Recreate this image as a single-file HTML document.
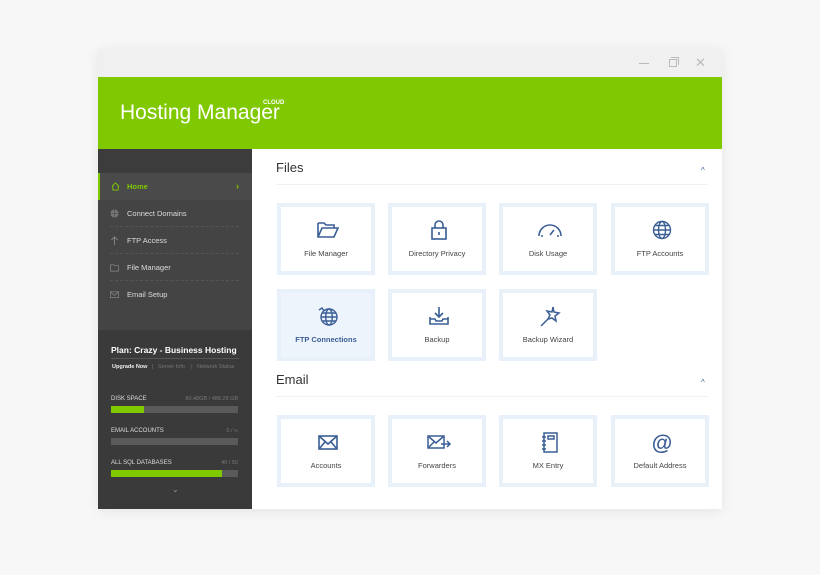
<!DOCTYPE html>
<html><head><style>
*{margin:0;padding:0;box-sizing:border-box}
body{width:820px;height:575px;background:#f7f7f7;font-family:"Liberation Sans",sans-serif;position:relative;overflow:hidden}
.win{position:absolute;left:98px;top:49px;width:624px;height:460px;background:#fff;box-shadow:0 2px 12px rgba(0,0,0,.08)}
.tb{position:absolute;left:0;top:0;width:624px;height:28px;background:#f0f0f0}
.hd{position:absolute;left:0;top:28px;width:624px;height:72px;background:#80c800}
.hd .t{position:absolute;left:22px;top:24px;color:#fff;font-size:21px}
.hd .c{position:absolute;left:165px;top:23px;color:#fff;font-size:6px;font-weight:bold}
.sb{position:absolute;left:0;top:100px;width:154px;height:360px;background:#444}
.sbt{position:absolute;left:0;top:0;width:154px;height:24px;background:#3c3c3c}
.mi{position:absolute;left:0;width:154px;height:27px;color:#ddd;font-size:7.5px;line-height:27px;padding-left:29px}
.mi .ic{position:absolute;left:12px;top:9px;width:9px;height:9px;color:#888}
.mi.sep:after{content:"";position:absolute;left:12px;right:13px;bottom:0;border-bottom:1px dashed #555}
.home{background:#4a4a4a;border-left:2px solid #80c800;color:#80c800;font-weight:bold;padding-left:27px}
.plan{position:absolute;left:0;top:181px;width:154px;height:179px;background:#3a3a3a}
.lbl{position:absolute;left:13px;font-size:6px;color:#ddd}
.val{position:absolute;right:14px;font-size:5.5px;color:#777}
.bar{position:absolute;left:13px;width:127px;height:7px;background:#5a5a5a}
.bar i{display:block;height:7px;background:#80c800}
.sec{position:absolute;left:178px;font-size:13px;color:#333}
.line{position:absolute;left:178px;width:432px;border-top:1px solid #eef0f3}
.car{position:absolute;left:603px;font-size:8px;color:#3a5e95}
.tile{position:absolute;width:98px;height:72px;border:4px solid #e8f0fa;background:#fff;text-align:center;font-size:7.5px;color:#444}
.tile svg{position:absolute;left:36px;top:13px}
.tile span{position:absolute;left:0;right:0;top:42px}
.act{background:#eef4fc;color:#3a5e95;font-weight:bold}
</style></head><body>
<div class="win">
<div class="tb">
<div style="position:absolute;left:541px;top:14px;width:10px;border-top:1px solid #bbb"></div>
<div style="position:absolute;left:571px;top:10px;width:8px;height:8px;border:1px solid #bbb"></div>
<div style="position:absolute;left:573px;top:8px;width:8px;height:8px;border-top:1px solid #bbb;border-right:1px solid #bbb"></div>
<div style="position:absolute;left:597px;top:6px;font-size:13px;color:#bbb">✕</div>
</div>
<div class="hd"><div class="t">Hosting Manager</div><div class="c">CLOUD</div></div>
<div class="sb">
<div class="sbt"></div>
<div class="mi home" style="top:24px"><svg class="ic" style="left:11px" viewBox="0 0 10 10"><path d="M1 5L5 1L9 5M2 4V9H8V4" fill="none" stroke="#80c800"/></svg>Home<span style="position:absolute;right:13px;font-size:9px">›</span></div>
<div class="mi sep" style="top:51px"><svg class="ic" viewBox="0 0 10 10"><circle cx="5" cy="5" r="4.5" fill="#777"/><path d="M0.5 5H9.5M5 .5V9.5" stroke="#444" stroke-width=".6"/></svg>Connect Domains</div>
<div class="mi sep" style="top:78px"><svg class="ic" viewBox="0 0 10 10"><path d="M5 10V1M1.5 4.5L5 1L8.5 4.5" fill="none" stroke="#888"/></svg>FTP Access</div>
<div class="mi sep" style="top:105px"><svg class="ic" viewBox="0 0 10 10"><path d="M.5 2H4L5 3H9.5V9H.5Z" fill="none" stroke="#888" stroke-width=".8"/></svg>File Manager</div>
<div class="mi" style="top:132px"><svg class="ic" viewBox="0 0 10 10"><rect x=".5" y="2" width="9" height="6.5" fill="none" stroke="#888" stroke-width=".8"/><path d="M.5 2L5 6L9.5 2" fill="none" stroke="#888" stroke-width=".8"/></svg>Email Setup</div>
<div class="plan">
<div style="position:absolute;left:13px;top:15px;font-size:8.5px;font-weight:bold;color:#fff">Plan: Crazy - Business Hosting</div>
<div style="position:absolute;left:13px;right:13px;top:28px;border-top:1px solid #555"></div>
<div style="position:absolute;left:14px;top:34px;font-size:5.5px;color:#eee;font-weight:bold">Upgrade Now <span style="color:#777;font-weight:normal">&nbsp; | &nbsp;&nbsp;Server Info &nbsp;&nbsp; | &nbsp;&nbsp;Network Status</span></div>
<div class="lbl" style="top:66px">DISK SPACE</div><div class="val" style="top:66px">80.48GB / 488.28 GB</div>
<div class="bar" style="top:76px"><i style="width:33px"></i></div>
<div class="lbl" style="top:98px">EMAIL ACCOUNTS</div><div class="val" style="top:98px">0 / ∞</div>
<div class="bar" style="top:108px"></div>
<div class="lbl" style="top:130px">ALL SQL DATABASES</div><div class="val" style="top:130px">40 / 50</div>
<div class="bar" style="top:140px"><i style="width:111px"></i></div>
<div style="position:absolute;left:74px;top:155px;font-size:8px;color:#999">⌄</div>
</div>
</div>
<div class="sec" style="top:111px">Files</div><div class="car" style="top:117px">^</div>
<div class="line" style="top:135px"></div>
<div class="sec" style="top:323px">Email</div><div class="car" style="top:329px">^</div>
<div class="line" style="top:347px"></div>
</div>
<div class="tile" style="left:277px;top:203px"><svg width="22" height="20" viewBox="0 0 22 20" fill="none" stroke="#3a5e95" stroke-width="1.6"><path d="M1 3H7L9 5H17V8M1 3V17H17L21 8H5L1 17"/></svg><span>File Manager</span></div>
<div class="tile" style="left:388px;top:203px"><svg width="22" height="20" viewBox="0 0 22 20" fill="none" stroke="#3a5e95" stroke-width="1.6"><rect x="4" y="8" width="14" height="11"/><path d="M7 8V5a4 4 0 0 1 8 0V8M11 12V15"/></svg><span>Directory Privacy</span></div>
<div class="tile" style="left:499px;top:203px"><svg width="26" height="20" viewBox="0 0 26 20" fill="none" stroke="#3a5e95" stroke-width="1.6" style="left:34px"><path d="M2 16A11 11 0 0 1 24 16M4 16H6M20 16H22M13 15L17 10"/></svg><span>Disk Usage</span></div>
<div class="tile" style="left:611px;top:203px"><svg width="22" height="20" viewBox="0 0 22 20" fill="none" stroke="#3a5e95" stroke-width="1.4"><circle cx="11" cy="10" r="8.5"/><ellipse cx="11" cy="10" rx="3.5" ry="8.5"/><path d="M2.5 10H19.5M4 5.5H18M4 14.5H18"/></svg><span>FTP Accounts</span></div>
<div class="tile act" style="left:277px;top:289px"><svg width="22" height="20" viewBox="0 0 22 20" fill="none" stroke="#3a5e95" stroke-width="1.4"><circle cx="12" cy="11" r="8"/><ellipse cx="12" cy="11" rx="3.3" ry="8"/><path d="M4 11H20M5.5 7H18.5M5.5 15H18.5M2 4L5 2L7 5"/></svg><span>FTP Connections</span></div>
<div class="tile" style="left:388px;top:289px"><svg width="22" height="20" viewBox="0 0 22 20" fill="none" stroke="#3a5e95" stroke-width="1.6"><path d="M11 1V11M7 7L11 11L15 7M2 11V18H20V11M2 13H7L8 15H14L15 13H20"/></svg><span>Backup</span></div>
<div class="tile" style="left:499px;top:289px"><svg width="22" height="22" viewBox="0 0 22 22" fill="none" stroke="#3a5e95" stroke-width="1.5"><path d="M14 1L15 6L20 7L16 10L17 15L13 12L9 13L11 9L8 5L13 6Z"/><path d="M10 12L2 20"/></svg><span>Backup Wizard</span></div>
<div class="tile" style="left:277px;top:415px"><svg width="22" height="20" viewBox="0 0 22 20" fill="none" stroke="#3a5e95" stroke-width="1.6"><rect x="2" y="4" width="18" height="13"/><path d="M2 4L11 12L20 4M2 17L8 10M20 17L14 10"/></svg><span>Accounts</span></div>
<div class="tile" style="left:388px;top:415px"><svg width="26" height="20" viewBox="0 0 26 20" fill="none" stroke="#3a5e95" stroke-width="1.5" style="left:34px"><rect x="2" y="4" width="16" height="12"/><path d="M2 4L10 11L18 4M2 16L8 10M15 12H24M21 9L24 12L21 15"/></svg><span>Forwarders</span></div>
<div class="tile" style="left:499px;top:415px"><svg width="22" height="22" viewBox="0 0 22 22" fill="none" stroke="#3a5e95" stroke-width="1.5"><rect x="5" y="1" width="13" height="19"/><rect x="9" y="4" width="6" height="3"/><path d="M3 5H7M3 9H7M3 13H7M3 17H7"/></svg><span>MX Entry</span></div>
<div class="tile" style="left:611px;top:415px"><svg width="22" height="22" viewBox="0 0 22 22"><text x="11" y="18" text-anchor="middle" font-family="Liberation Sans" font-size="21" font-weight="bold" fill="#3a5e95">@</text></svg><span>Default Address</span></div>
</body></html>
